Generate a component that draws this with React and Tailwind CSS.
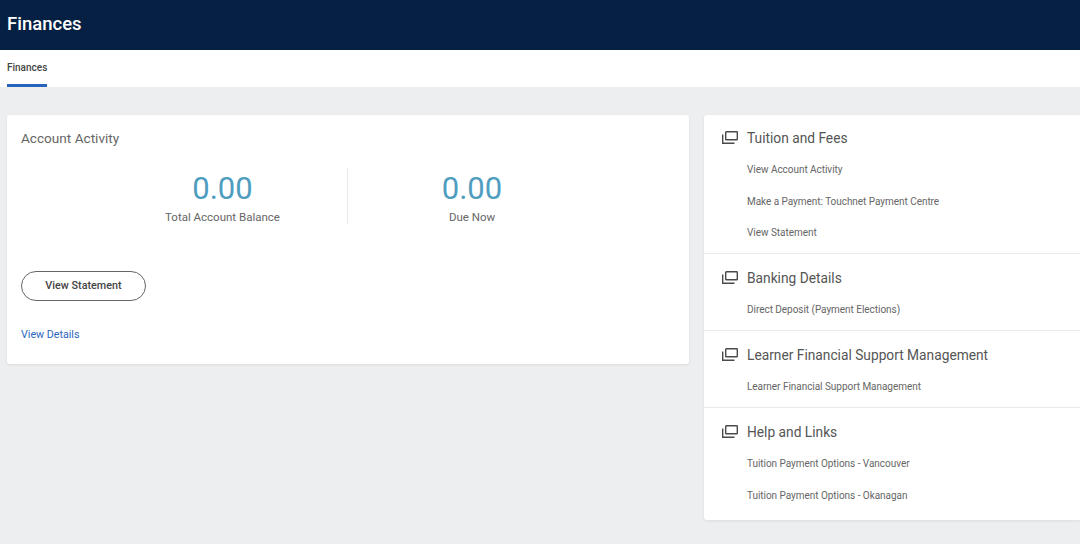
import React from "react";

function StackIcon() {
  return (
    <svg width="16" height="13" viewBox="0 0 16 13" fill="none" stroke="#4a4a4a" strokeWidth="1.4" className="shrink-0 -mt-[1px]">
      <rect x="3.7" y="0.7" width="11.6" height="8.1" rx="0.6" />
      <path d="M0.7 3.5V12.2H12.5" />
    </svg>
  );
}

function Section({ title, links, last, pb }) {
  return (
    <div className={`${last ? "" : "border-b border-[#e8ebed]"} ${pb}`}>
      <div className="flex items-center h-[22px] pl-[18px] gap-[9px]">
        <StackIcon />
        <span className="text-[13.75px] leading-[22px] text-[#555555]">{title}</span>
      </div>
      <div className="pl-[43px] pt-[5px] flex flex-col">
        {links.map((l) => (
          <div key={l} className="h-[31.5px] flex items-center text-[10px] tracking-[-0.04px] text-[#666666]">{l}</div>
        ))}
      </div>
    </div>
  );
}

function Stat({ value, label, divider, width }) {
  return (
    <div className={`${width} h-[56px] flex flex-col items-center ${divider ? "border-r border-[#e8ebed]" : ""}`}>
      <div className="text-[31px] leading-[40px] text-[#4f9dbf] mt-[1px]">{value}</div>
      <div className="text-[11.5px] leading-[16px] text-[#666666]">{label}</div>
    </div>
  );
}

export default function App() {
  return (
    <div className="w-[1080px] h-[544px] overflow-hidden bg-[#edeef0] font-['Roboto',sans-serif]">
      <div className="h-[50px] bg-[#052042] flex items-center pl-[7px] pb-[1px]">
        <span className="text-[18.5px] font-medium text-white">Finances</span>
      </div>
      <div className="h-[37px] bg-white pl-[7px]">
        <div className="w-fit h-[37px] border-b-[3px] border-[#2563bd] flex items-center pt-[1px]">
          <span className="text-[10px] font-medium text-[#444444]">Finances</span>
        </div>
      </div>
      <div className="flex items-start pt-[28px] pl-[7px] gap-[15px]">
        <div className="w-[682px] h-[249px] bg-white rounded-[3px] shadow-[0_1px_3px_rgba(0,0,0,0.08)] px-[14px] pt-[13px]">
          <div className="text-[13.6px] leading-[20px] text-[#666666]">Account Activity</div>
          <div className="flex pl-[77px] mt-[20px]">
            <Stat width="w-[250px]" value="0.00" label="Total Account Balance" divider />
            <Stat width="w-[248px]" value="0.00" label="Due Now" />
          </div>
          <button className="mt-[47px] w-[125px] h-[30px] rounded-full border border-[#666666] bg-white text-[10.8px] font-medium text-[#444444] flex items-center justify-center">
            View Statement
          </button>
          <div className="mt-[26px] text-[10.7px] leading-[16px] text-[#2b66bd]">View Details</div>
        </div>
        <div className="w-[376px] h-[405px] bg-white rounded-l-[3px] shadow-[0_1px_3px_rgba(0,0,0,0.08)] pt-[12px]">
          <Section pb="h-[127px]" title="Tuition and Fees" links={["View Account Activity", "Make a Payment: Touchnet Payment Centre", "View Statement"]} />
          <div className="pt-[13px]">
            <Section pb="h-[64px]" title="Banking Details" links={["Direct Deposit (Payment Elections)"]} />
          </div>
          <div className="pt-[13px]">
            <Section pb="h-[64px]" title="Learner Financial Support Management" links={["Learner Financial Support Management"]} />
          </div>
          <div className="pt-[13px]">
            <Section last pb="" title="Help and Links" links={["Tuition Payment Options - Vancouver", "Tuition Payment Options - Okanagan"]} />
          </div>
        </div>
      </div>
    </div>
  );
}
